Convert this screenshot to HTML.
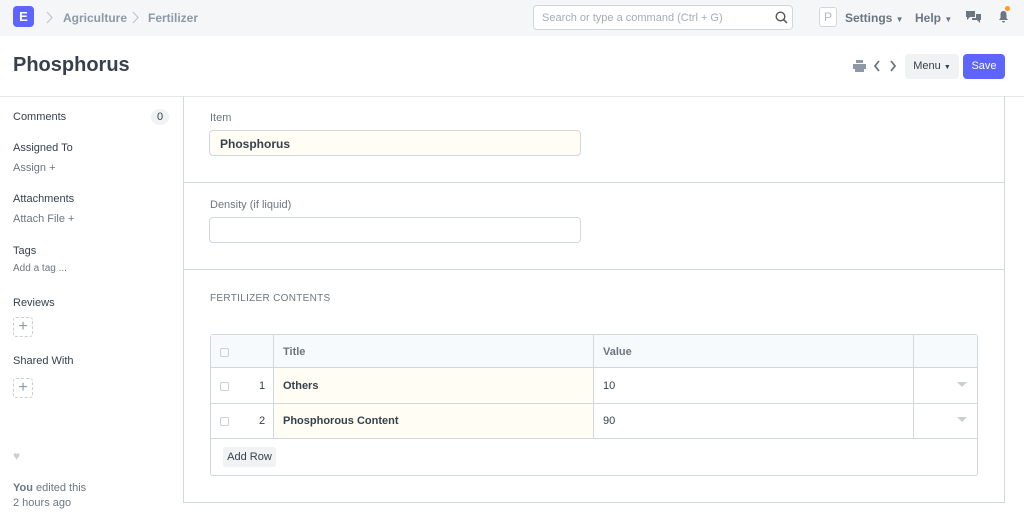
<!DOCTYPE html><html><head><style>
*{box-sizing:border-box;margin:0;padding:0}
body{width:1024px;height:518px;overflow:hidden;font-family:"Liberation Sans",sans-serif;background:#fff;color:#36414c;position:relative}
.a{position:absolute}
.nav{top:0;left:0;width:1024px;height:36px;background:#f5f6f8}
.s{font-size:11px;color:#36414c}
.lbl{font-size:11px;color:#6c7680}
.in{border:1px solid #d1d8dd;border-radius:4px;height:26px}
.th{font-size:11px;color:#6c7680;font-weight:bold}
.cb{width:9px;height:9px;border:1px solid #c8cfd5;border-radius:2px}
</style></head><body>
<div class="a nav"></div>
<div class="a" style="left:13px;top:6px;width:21px;height:21px;background:#5e64ff;border-radius:4px;color:#fff;font-weight:bold;font-size:13px;text-align:center;line-height:21px">E</div>
<svg class="a" style="left:46px;top:11px" width="8" height="13"><path d="M1 1l5 5.5L1 12" fill="none" stroke="#c0c6cc" stroke-width="1.2"/></svg>
<div class="a" style="left:63px;top:11px;font-size:12px;font-weight:bold;color:#8d99a6">Agriculture</div>
<svg class="a" style="left:132px;top:11px" width="8" height="13"><path d="M1 1l5 5.5L1 12" fill="none" stroke="#c0c6cc" stroke-width="1.2"/></svg>
<div class="a" style="left:148px;top:11px;font-size:12px;font-weight:bold;color:#8d99a6">Fertilizer</div>
<div class="a" style="left:533px;top:5px;width:260px;height:25px;background:#fff;border:1px solid #d1d8dd;border-radius:4px"></div>
<div class="a" style="left:542px;top:12px;font-size:11px;color:#a3acb5">Search or type a command (Ctrl + G)</div>
<svg class="a" style="left:775px;top:11px" width="13" height="13"><circle cx="5.5" cy="5.5" r="4.3" fill="none" stroke="#555" stroke-width="1.4"/><path d="M8.7 8.7L12 12" stroke="#555" stroke-width="1.5"/></svg>
<div class="a" style="left:819px;top:7px;width:18px;height:20px;border:1px solid #d1d8dd;border-radius:3px;background:#fff;color:#b0b8c0;font-size:12px;text-align:center;line-height:18px">P</div>
<div class="a" style="left:845px;top:11px;font-size:12px;font-weight:bold;color:#6c7680">Settings <span style="font-size:8px">▼</span></div>
<div class="a" style="left:915px;top:11px;font-size:12px;font-weight:bold;color:#6c7680">Help <span style="font-size:8px">▼</span></div>
<svg class="a" style="left:966px;top:11px" width="15" height="12"><path d="M0 0h9v6H4l-3 3V6H0zM10 3h5v6h-1v3l-3-3H6V7h4z" fill="#6c7680"/></svg>
<svg class="a" style="left:998px;top:10px" width="11" height="13"><path d="M5.5 1C3 1 2.5 3 2.5 5v3L1 10h9L8.5 8V5C8.5 3 8 1 5.5 1zM4 11h3a1.5 1.5 0 0 1-3 0z" fill="#6c7680"/></svg>
<div class="a" style="left:1005px;top:6px;width:5px;height:5px;border-radius:50%;background:#ff9a1a"></div>
<div class="a" style="left:13px;top:54px;font-size:20px;font-weight:bold;color:#36414c">Phosphorus</div>
<svg class="a" style="left:853px;top:60px" width="13" height="12"><path d="M3 0h7v3H3zM0 4h13v5h-2v3H2V9H0zM3 8h7v3H3z" fill="#8d99a6"/></svg>
<svg class="a" style="left:873px;top:60px" width="24" height="12"><path d="M6 1L2 6l4 5M18 1l4 5-4 5" fill="none" stroke="#6c7680" stroke-width="1.8"/></svg>
<div class="a" style="left:905px;top:54px;width:54px;height:25px;background:#f0f2f4;border-radius:4px;font-size:11px;text-align:center;line-height:25px">Menu <span style="font-size:7px">▼</span></div>
<div class="a" style="left:963px;top:54px;width:42px;height:25px;background:#5e64ff;border-radius:4px;font-size:11px;color:#fff;text-align:center;line-height:25px">Save</div>
<div class="a" style="left:0;top:96px;width:1024px;border-top:1px solid #e4e8eb"></div>
<div class="a s" style="left:13px;top:111px">Comments</div>
<div class="a" style="left:151px;top:109px;width:18px;height:16px;background:#f0f2f4;border-radius:8px;font-size:11px;text-align:center;line-height:16px">0</div>
<div class="a s" style="left:13px;top:142px">Assigned To</div>
<div class="a lbl" style="left:13px;top:162px">Assign +</div>
<div class="a s" style="left:13px;top:193px">Attachments</div>
<div class="a lbl" style="left:13px;top:213px">Attach File +</div>
<div class="a s" style="left:13px;top:245px">Tags</div>
<div class="a lbl" style="left:13px;top:263px;font-size:10px">Add a tag ...</div>
<div class="a s" style="left:13px;top:297px">Reviews</div>
<div class="a" style="left:13px;top:317px;width:20px;height:20px;border:1px dashed #c8cfd5;border-radius:3px;text-align:center;line-height:18px;color:#8d99a6">+</div>
<div class="a s" style="left:13px;top:355px">Shared With</div>
<div class="a" style="left:13px;top:378px;width:20px;height:20px;border:1px dashed #c8cfd5;border-radius:3px;text-align:center;line-height:18px;color:#8d99a6">+</div>
<div class="a" style="left:13px;top:449px;color:#c8cfd5;font-size:12px">♥</div>
<div class="a lbl" style="left:13px;top:482px"><b style="color:#6c7680">You</b> edited this</div>
<div class="a lbl" style="left:13px;top:497px">2 hours ago</div>
<div class="a" style="left:183px;top:96px;width:822px;height:407px;border:1px solid #d1d8dd;border-top:0"></div>
<div class="a" style="left:183px;top:182px;width:822px;border-top:1px solid #d1d8dd"></div>
<div class="a" style="left:183px;top:269px;width:822px;border-top:1px solid #d1d8dd"></div>
<div class="a lbl" style="left:210px;top:112px">Item</div>
<div class="a in" style="left:209px;top:130px;width:372px;background:#fffdf4;font-size:12px;font-weight:bold;padding:6px 10px">Phosphorus</div>
<div class="a lbl" style="left:210px;top:199px">Density (if liquid)</div>
<div class="a in" style="left:209px;top:217px;width:372px"></div>
<div class="a lbl" style="left:210px;top:293px;font-size:10px;letter-spacing:.3px">FERTILIZER CONTENTS</div>
<div class="a" style="left:210px;top:334px;width:768px;height:142px;border:1px solid #d1d8dd;border-radius:3px"></div>
<div class="a" style="left:211px;top:335px;width:766px;height:33px;background:#f7fafc;border-bottom:1px solid #d1d8dd"></div>
<div class="a" style="left:273px;top:368px;width:320px;height:70px;background:#fffdf4"></div>
<div class="a" style="left:211px;top:403px;width:766px;border-top:1px solid #d1d8dd"></div>
<div class="a" style="left:211px;top:438px;width:766px;border-top:1px solid #d1d8dd"></div>
<div class="a" style="left:273px;top:335px;height:103px;border-left:1px solid #d1d8dd"></div>
<div class="a" style="left:593px;top:335px;height:103px;border-left:1px solid #d1d8dd"></div>
<div class="a" style="left:913px;top:335px;height:103px;border-left:1px solid #d1d8dd"></div>
<div class="a cb" style="left:220px;top:348px"></div>
<div class="a cb" style="left:220px;top:382px"></div>
<div class="a cb" style="left:220px;top:417px"></div>
<div class="a th" style="left:283px;top:346px">Title</div>
<div class="a th" style="left:603px;top:346px">Value</div>
<div class="a s" style="left:259px;top:380px">1</div>
<div class="a s" style="left:259px;top:415px">2</div>
<div class="a s" style="left:283px;top:380px;font-weight:bold">Others</div>
<div class="a s" style="left:283px;top:415px;font-weight:bold">Phosphorous Content</div>
<div class="a s" style="left:603px;top:380px">10</div>
<div class="a s" style="left:603px;top:415px">90</div>
<div class="a" style="left:957px;top:382px;border:5px solid transparent;border-top:5px solid #c8cfd5"></div>
<div class="a" style="left:957px;top:417px;border:5px solid transparent;border-top:5px solid #c8cfd5"></div>
<div class="a" style="left:223px;top:447px;width:53px;height:20px;background:#f0f2f4;border-radius:3px;font-size:11px;text-align:center;line-height:20px">Add Row</div>
</body></html>
